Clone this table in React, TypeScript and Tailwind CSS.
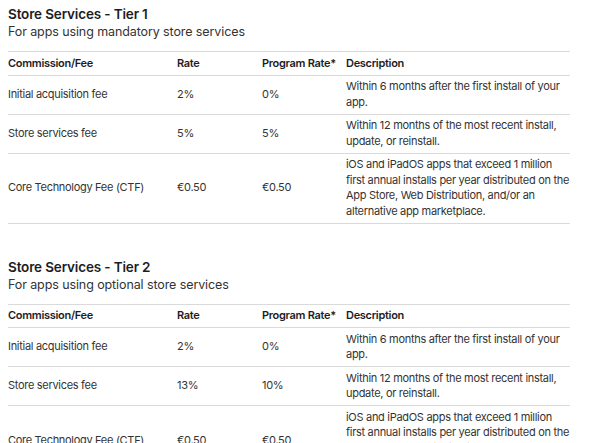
const tiers = [
  {
    title: 'Store Services - Tier 1',
    subtitle: 'For apps using mandatory store services',
    rows: [
      ['Initial acquisition fee', '2%', '0%', 'Within 6 months after the first install of your app.'],
      ['Store services fee', '5%', '5%', 'Within 12 months of the most recent install, update, or reinstall.'],
      [
        'Core Technology Fee (CTF)',
        '€0.50',
        '€0.50',
        'iOS and iPadOS apps that exceed 1 million first annual installs per year distributed on the App Store, Web Distribution, and/or an alternative app marketplace.',
      ],
    ],
  },
  {
    title: 'Store Services - Tier 2',
    subtitle: 'For apps using optional store services',
    rows: [
      ['Initial acquisition fee', '2%', '0%', 'Within 6 months after the first install of your app.'],
      ['Store services fee', '13%', '10%', 'Within 12 months of the most recent install, update, or reinstall.'],
      [
        'Core Technology Fee (CTF)',
        '€0.50',
        '€0.50',
        'iOS and iPadOS apps that exceed 1 million first annual installs per year distributed on the App Store, Web Distribution, and/or an alternative app marketplace.',
      ],
    ],
  },
]

function FeeTable({ rows }: { rows: string[][] }) {
  return (
    <table className="w-[562px] table-fixed border-collapse text-[11px] leading-[15.5px] tracking-[-0.3px] text-[#333]">
      <colgroup>
        <col className="w-[169px]" />
        <col className="w-[85px]" />
        <col className="w-[84px]" />
        <col />
      </colgroup>
      <thead>
        <tr className="border-y border-[#dadada] text-left whitespace-nowrap text-[#1d1d1f]">
          <th className="py-[3.5px] font-semibold">Commission/Fee</th>
          <th className="py-[3.5px] font-semibold">Rate</th>
          <th className="py-[3.5px] font-semibold">Program Rate*</th>
          <th className="py-[3.5px] font-semibold">Description</th>
        </tr>
      </thead>
      <tbody>
        {rows.map((r, i) => (
          <tr key={i} className="border-b border-[#dadada] align-middle">
            <td className="py-[3.5px]">{r[0]}</td>
            <td className="py-[3.5px]">{r[1]}</td>
            <td className="py-[3.5px]">{r[2]}</td>
            <td className="py-[3.5px]">{r[3]}</td>
          </tr>
        ))}
      </tbody>
    </table>
  )
}

export default function App() {
  return (
    <div className="h-[443px] w-[590px] overflow-hidden bg-white px-2 pt-[5px] font-['Inter',sans-serif]">
      {tiers.map((t, i) => (
        <section key={i} className={i ? 'mt-[34px]' : ''}>
          <h2 className="text-[13.5px] leading-[18px] font-semibold tracking-[-0.15px] text-[#1d1d1f]">{t.title}</h2>
          <p className="text-[12.5px] leading-[18px] tracking-[-0.1px] text-[#333]">{t.subtitle}</p>
          <div className="mt-[10px]">
            <FeeTable rows={t.rows} />
          </div>
        </section>
      ))}
    </div>
  )
}
